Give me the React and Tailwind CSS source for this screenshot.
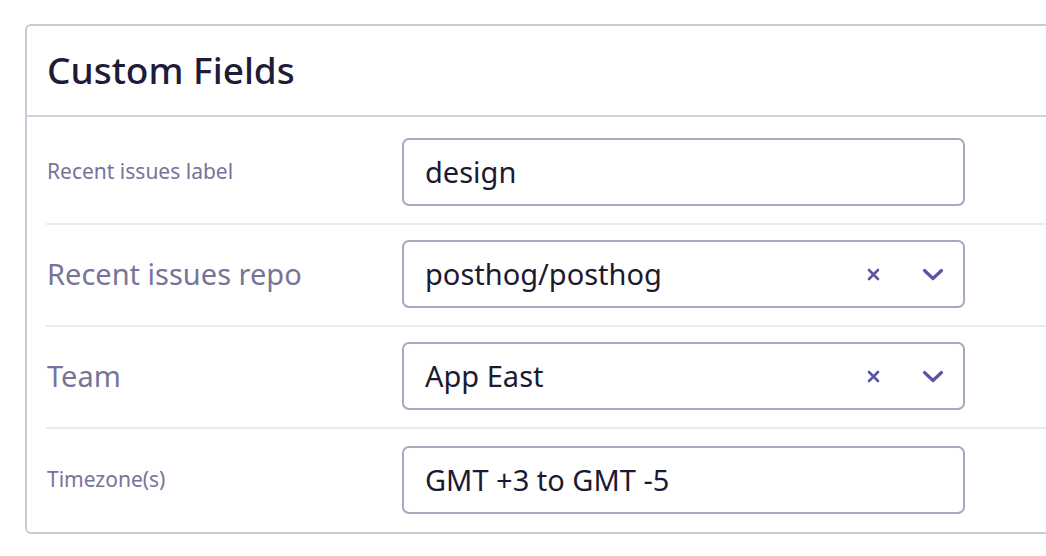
import React from "react";

const font = { fontFamily: "'Noto Sans', 'Open Sans', sans-serif" };

function XIcon() {
  return (
    <svg width="13" height="13" viewBox="0 0 13 13" className="text-[#5a55a6]">
      <path d="M2 2 L11 11 M11 2 L2 11" stroke="currentColor" strokeWidth="2.6" strokeLinecap="round" fill="none" />
    </svg>
  );
}

function Chevron() {
  return (
    <svg width="22" height="13" viewBox="0 0 22 13" className="text-[#5a55a6]">
      <path d="M2.5 2.5 L11 10.5 L19.5 2.5" stroke="currentColor" strokeWidth="3.2" strokeLinecap="round" strokeLinejoin="round" fill="none" />
    </svg>
  );
}

function Row({ label, small, value, select, first, last }) {
  const pad = first
    ? "pt-[21px] pb-[17px] border-b-2 border-[#ecebf2]"
    : last
    ? "pt-[17px] pb-[18px]"
    : "pt-[15px] pb-[17px] border-b-2 border-[#ecebf2]";
  return (
    <div className={`flex items-center ${pad}`}>
      <div
        className={`w-[356px] shrink-0 pl-px text-[#77749a] ${small ? "text-[21px]" : "text-[29px]"}`}
      >
        {label}
      </div>
      <div className="w-[563px] h-[68px] shrink-0 rounded-[7px] border-2 border-[#aaa7bf] flex items-center pl-[21px] pr-[19px] text-[29px] text-[#1c1a31]">
        <span className="flex-1">{value}</span>
        {select && (
          <div className="flex items-center gap-[42px]">
            <XIcon />
            <Chevron />
          </div>
        )}
      </div>
    </div>
  );
}

export default function App() {
  return (
    <div className="w-[1046px] h-[556px] bg-white overflow-hidden pt-[24px] pl-[25px]" style={font}>
      <div className="w-[1100px] border-2 border-[#c9c7d8] rounded-[6px] bg-white">
        <div className="h-[91px] flex items-center pl-[20px] border-b-2 border-[#d5d3e1]">
          <h1 className="text-[37px] font-medium text-[#1e1c39] leading-none pb-[2px]">Custom Fields</h1>
        </div>
        <div className="pl-[19px]">
          <Row label="Recent issues label" small value="design" first />
          <Row label="Recent issues repo" value="posthog/posthog" select />
          <Row label="Team" value="App East" select />
          <Row label="Timezone(s)" small value="GMT +3 to GMT -5" last />
        </div>
      </div>
    </div>
  );
}
